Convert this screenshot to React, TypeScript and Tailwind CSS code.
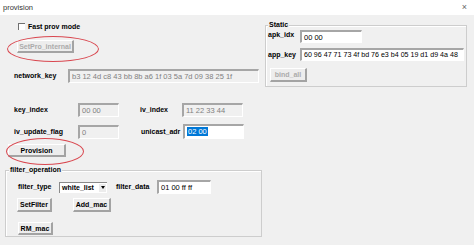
import { ReactNode } from "react";

type BoxProps = {
  className?: string;
  children?: ReactNode;
  disabled?: boolean;
};

// sunken edit control
function Edit({ className = "", children, disabled }: BoxProps) {
  return (
    <div
      className={`flex items-start overflow-hidden whitespace-nowrap border-t-2 border-l-2 border-b border-r border-t-[#a6a6a6] border-l-[#a6a6a6] border-b-white border-r-white pl-[2px] pt-[1px] leading-[9px] ${
        disabled ? "bg-[#f0f0f0] text-[#808080]" : "bg-white text-black"
      } ${className}`}
    >
      {children}
    </div>
  );
}

// raised push button
function Btn({ className = "", children, disabled }: BoxProps) {
  return (
    <button
      type="button"
      className={`flex items-center justify-center border-t border-l border-t-white border-l-white border-b-2 border-r-2 border-b-[#a3a3a3] border-r-[#a3a3a3] bg-[#ededed] text-[7px] font-bold leading-none ${
        disabled ? "text-[#ababab]" : "text-black"
      } ${className}`}
    >
      {children}
    </button>
  );
}

function Label({ className = "", children }: BoxProps) {
  return <span className={`shrink-0 text-[7px] font-bold leading-[8px] text-black ${className}`}>{children}</span>;
}

export default function App() {
  return (
    <div className="relative h-[245px] w-[474px] overflow-hidden bg-[#f0f0f0] font-['Liberation_Sans',Arial,sans-serif]">
      {/* title bar */}
      <div className="flex h-[15px] items-center justify-between bg-white pl-[3px] pr-[7px]">
        <span className="text-[7.5px] leading-none text-[#333]">provision</span>
        <span className="text-[9px] leading-none text-[#666]">×</span>
      </div>

      <div className="flex">
        {/* left side */}
        <div className="flex w-[265px] flex-col">
          <div className="ml-[18px] mt-[8px] flex h-[7px] items-center">
            <div className="h-[7px] w-[7px] border-t border-l border-t-[#707070] border-l-[#707070] bg-white" />
            <Label className="ml-[3px]">Fast prov mode</Label>
          </div>

          <Btn disabled className="ml-[17px] mt-[10px] h-[13px] w-[57px]">
            SetPro_internal
          </Btn>

          <div className="ml-[14px] mt-[16px] flex items-center">
            <Label className="w-[54px]">network_key</Label>
            <Edit disabled className="h-[14px] w-[191px] text-[7.5px]">
              b3 12 4d c8 43 bb 8b a6 1f 03 5a 7d 09 38 25 1f
            </Edit>
          </div>

          <div className="ml-[14px] mt-[20px] flex items-center">
            <Label className="w-[64px]">key_index</Label>
            <Edit disabled className="h-[14px] w-[41px] text-[7.5px]">
              00 00
            </Edit>
            <Label className="ml-[21px] w-[42px]">iv_index</Label>
            <Edit disabled className="h-[14px] w-[61px] text-[7.5px]">
              11 22 33 44
            </Edit>
          </div>

          <div className="ml-[14px] mt-[7px] flex items-center">
            <Label className="w-[64px]">iv_update_flag</Label>
            <Edit disabled className="h-[14px] w-[41px] text-[7.5px]">
              0
            </Edit>
            <Label className="ml-[22px] w-[42px]">unicast_adr</Label>
            <Edit className="h-[15px] w-[61px] text-[7.5px]">
              <span className="bg-[#0078d7] px-[1px] text-white">02 00</span>
            </Edit>
          </div>

          <Btn className="ml-[8px] mt-[5px] h-[13px] w-[58px]">Provision</Btn>

          {/* filter_operation group */}
          <div className="relative ml-[5px] mt-[13px] h-[67px] w-[257px] border border-[#cdcdcd] shadow-[inset_1px_1px_0_#fff]">
            <span className="absolute -top-[5px] left-[3px] bg-[#f0f0f0] px-[1px] text-[7px] font-bold leading-[8px]">
              filter_operation
            </span>
            <div className="flex flex-col pl-[11px] pt-[9px]">
              <div className="ml-[1px] flex items-center">
                <Label className="w-[41px]">filter_type</Label>
                <div className="flex h-[11px] w-[48px] border-t border-l border-t-[#8a8a8a] border-l-[#8a8a8a] bg-white">
                  <span className="grow pl-[2px] text-[7px] font-bold leading-[10px]">white_list</span>
                  <div className="my-[1px] mr-[1px] flex w-[7px] items-center justify-center bg-[#ececec]">
                    <div className="h-0 w-0 border-l-[2px] border-r-[2px] border-t-[3px] border-l-transparent border-r-transparent border-t-black" />
                  </div>
                </div>
                <Label className="ml-[9px] w-[41px]">filter_data</Label>
                <Edit className="h-[14px] w-[54px] text-[7.5px]">01 00 ff ff</Edit>
              </div>

              <div className="mt-[4px] flex">
                <Btn className="h-[14px] w-[35px]">SetFilter</Btn>
                <Btn className="ml-[21px] h-[14px] w-[38px]">Add_mac</Btn>
              </div>

              <Btn className="ml-[1px] mt-[10px] h-[13px] w-[35px]">RM_mac</Btn>
            </div>
          </div>
        </div>

        {/* Static group */}
        <div className="relative mt-[10px] h-[62px] w-[202px] border border-[#cdcdcd] shadow-[inset_1px_1px_0_#fff]">
          <span className="absolute -top-[5px] left-[2px] bg-[#f0f0f0] px-[1px] text-[7px] font-bold leading-[8px]">
            Static
          </span>
          <div className="flex flex-col pl-[2px] pt-[4px]">
            <div className="flex items-start">
              <Label className="mt-[1px] w-[32px]">apk_idx</Label>
              <Edit className="h-[13px] w-[62px] text-[7.5px]">00 00</Edit>
            </div>
            <div className="mt-[5px] flex items-center">
              <Label className="w-[32px]">app_key</Label>
              <Edit className="h-[13px] w-[164px] text-[7.1px]">60 96 47 71 73 4f bd 76 e3 b4 05 19 d1 d9 4a 48</Edit>
            </div>
            <Btn disabled className="ml-[2px] mt-[7px] h-[14px] w-[37px]">
              bind_all
            </Btn>
          </div>
        </div>
      </div>

      {/* red marks drawn over the dialog */}
      <div className="absolute left-[7px] top-[36px] h-[26px] w-[92px] rounded-[50%] border-[1.5px] border-[#d9474f]" />
      <div className="absolute left-[6px] top-[138px] h-[27px] w-[78px] rounded-[50%] border-[1.5px] border-[#d9474f]" />
    </div>
  );
}
